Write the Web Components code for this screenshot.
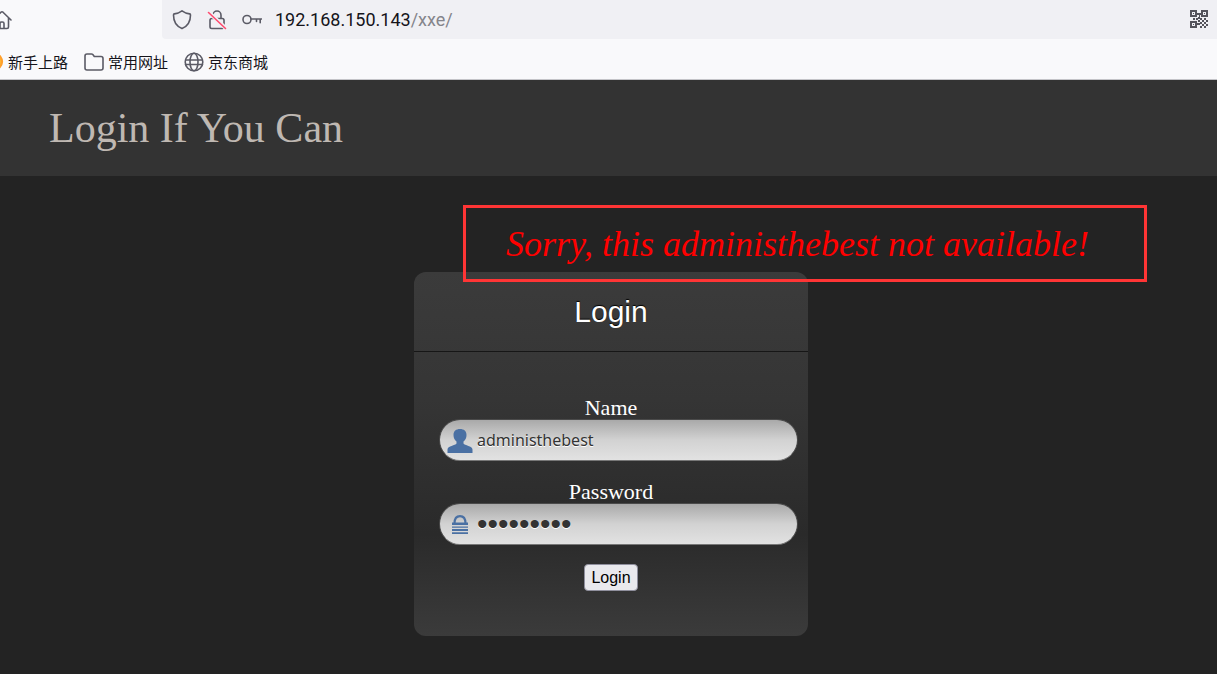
<!DOCTYPE html>
<html lang="zh-CN">
<head>
<meta charset="utf-8">
<title>Login If You Can</title>
<style>
  html, body { margin: 0; min-height: 100%; background: #232323; }
  body { font-family: "Liberation Serif", serif; }
</style>
</head>
<body>
<browser-chrome></browser-chrome>
<page-banner>Login If You Can</page-banner>
<login-page>
  <alert-note slot="alert">Sorry, this administhebest not available!</alert-note>
  <login-card></login-card>
</login-page>

<script>
const define = (name, html, setup) => customElements.define(name, class extends HTMLElement {
  constructor() {
    super();
    const t = document.createElement('template');
    t.innerHTML = html;
    this.attachShadow({ mode: 'open' }).append(t.content.cloneNode(true));
    if (setup) setup(this, this.shadowRoot);
  }
});

/* Line icons on a 20px grid */
const icons = {
  home: '<path d="M1 10 9 2.200Q10 1.300 11 2.200L19 10M3.500 8v9q0 1.500 1.500 1.500h10q1.500 0 1.500-1.500V8M8 18.500v-5q0-1.500 1.500-1.500h1q1.500 0 1.500 1.500v5"/>',
  shield: '<path d="M10 .8C7.500 2.600 5 3.500 2.400 3.900 1.800 4 1.500 4.400 1.500 5c0 6.600 2.500 11.100 8.500 13.600C16 16.100 18.500 11.600 18.500 5c0-.6-.3-1-.9-1.100C15 3.500 12.500 2.600 10 .8Z"/>',
  lock: '<path d="M6 8.500V5.200C6 2.800 7.700 1 10 1s4 1.800 4 4.200v3.300M4.700 8.500h10.600q1.700 0 1.700 1.700v6.600q0 1.700-1.700 1.700H4.700Q3 18.500 3 16.800v-6.600q0-1.700 1.700-1.700Z"/><path d="M2 2.500 19 18.500" stroke="#f0f0f4" stroke-width="4"/><path d="M1.500 2.500 18.500 18.500" stroke="#ff4a6e" stroke-width="1.600"/>',
  key: '<circle cx="5" cy="9.500" r="4"/><path d="M9 9h11M18.200 9v3.700M14.500 9v2.500"/>',
  folder: '<path d="M3 2h4.500q.8 0 1.300.6L10.300 4.500H17q2 0 2 2V16q0 2-2 2H3q-2 0-2-2V4q0-2 2-2Z"/>',
  globe: '<circle cx="10" cy="10" r="8.800"/><ellipse cx="10" cy="10" rx="4" ry="8.800"/><path d="M1.500 8h17M1.500 12.500h17"/>',
  flame: '<circle cx="10" cy="10" r="8.500" fill="#ffb52e" stroke="none"/><path d="M16 4q5 7-2 13" stroke="#ff9f2c" stroke-width="2"/>',
  qr: '<g fill="#55545c" stroke="none"><path fill-rule="evenodd" d="M1 0h7v7H1ZM3 2v3h3V2ZM12 0h7v7h-7ZM14 2v3h3V2ZM1 11h7v7H1ZM3 13v3h3v-3Z"/><path d="M4 3h1v1H4ZM15 3h1v1h-1ZM4 14h1v1H4ZM8 3h4v2H8ZM10 5h1v2h-1ZM9 7h2v2H9ZM4 8h2v2H4ZM7 8h2v2H7ZM11 8h2v2h-2ZM15 8h2v2h-2ZM9 10h2v2H9ZM13 10h2v2h-2ZM17 10h2v2h-2ZM8 13h3v2H8ZM11 12h2v2h-2ZM15 12h2v2h-2ZM13 14h2v2h-2ZM17 14h2v2h-2ZM11 16h2v2h-2ZM15 16h2v2h-2Z"/></g>'
};
define('line-icon', `
<style>
  :host { display: block; flex: none; width: 20px; height: 20px; color: #5b5b66; }
  svg { display: block; width: 100%; height: 100%; fill: none; stroke: currentColor; stroke-width: 1.600; stroke-linecap: round; stroke-linejoin: round; }
</style><svg viewBox="0 0 20 20" aria-hidden="true"></svg>`,
(el, root) => { root.querySelector('svg').innerHTML = icons[el.getAttribute('name')] || ''; });

define('book-mark', `
<style>
  :host { display: block; }
  a { display: flex; align-items: center; gap: 4px; color: #15141a; text-decoration: none;
      font: 15px/20px "Noto Sans CJK SC", sans-serif; }
</style><a href="#"><slot name="icon"></slot><slot></slot></a>`);

define('browser-chrome', `
<style>
  :host { display: block; background: #f9f9fb; border-bottom: 1px solid #c4c4c8; overflow: hidden; }
  .nav { display: flex; height: 39px; }
  .tools { flex: none; width: 162px; display: flex; align-items: center; }
  button { border: 0; padding: 0; margin-left: -8px; background: none; }
  .url { flex: 1; display: flex; align-items: center; gap: 15px; padding: 0 8px 0 10px; background: #f0f0f4; border-radius: 0 0 0 4px; }
  .address { flex: 1; margin-left: -2px; font: 18px/24px Roboto, "Noto Sans", sans-serif; color: #15141a; }
  .path { color: #84848b; }
  .marks { display: flex; align-items: center; gap: 16px; height: 34px; padding-top: 6px; margin-left: -16px; }
</style>
<div class="nav">
  <div class="tools"><button aria-label="主页"><line-icon name="home"></line-icon></button></div>
  <div class="url">
    <line-icon name="shield"></line-icon><line-icon name="lock"></line-icon><line-icon name="key"></line-icon>
    <div class="address">192.168.150.143<span class="path">/xxe/</span></div>
    <line-icon name="qr"></line-icon>
  </div>
</div>
<nav class="marks">
  <book-mark><line-icon slot="icon" name="flame"></line-icon>新手上路</book-mark>
  <book-mark><line-icon slot="icon" name="folder"></line-icon>常用网址</book-mark>
  <book-mark><line-icon slot="icon" name="globe"></line-icon>京东商城</book-mark>
</nav>`);

define('page-banner', `
<style>
  :host { display: block; background: #333; padding: 24px 49px; }
  h1 { margin: 0; font-size: 42px; line-height: 48px; font-weight: 400; color: #bfb8b2; white-space: nowrap; }
</style><h1><slot></slot></h1>`);

define('alert-note', `
<style>
  :host { display: block; position: relative; z-index: 1; box-sizing: border-box; width: 684px;
    margin: 0 70px -10px auto; padding: 16px 40px 15px; border: 3px solid #ff3535; }
  p { margin: 0; font-size: 36px; line-height: 40px; font-style: italic; color: #f00; white-space: nowrap; }
</style><p role="alert"><slot></slot></p>`);

define('login-page', `
<style>
  :host { display: block; padding: 29px 0 38px; }
  .center { display: flex; justify-content: center; padding-left: 5px; }
</style><slot name="alert"></slot><div class="center"><slot></slot></div>`);

define('login-card', `
<style>
  :host { display: block; width: 394px; border-radius: 12px; text-align: center; color: #fff;
    background: linear-gradient(#3b3b3b, #353535 35%, #2a2a2a 72%, #3b3b3b); }
  h2 { margin: 0; padding: 20px 0 19px; border-bottom: 1px solid #161616;
    font: 30px/40px "Liberation Sans", sans-serif; text-shadow: 0 -1px 1px #000; }
  form { padding: 44px 10px 45px 25px; }
  label { display: block; margin-right: 15px; font-size: 22px; line-height: 23px; }
  .field { box-sizing: border-box; display: flex; align-items: center; height: 42px; margin-bottom: 19px; padding: 0 7px;
    border: 1px solid #4a4a4a; border-bottom-color: #777; border-radius: 21px;
    background: linear-gradient(#a9a9a9, #d2d2d2 50%, #e2e2e2); }
  .field svg { flex: none; width: 26px; height: 26px; }
  input { flex: 1; min-width: 0; box-sizing: border-box; height: 24px; border: 0; outline: 0; padding: 0 0 0 4px; background: none; color: #333;
    font: 16px/24px "Noto Sans", sans-serif; text-shadow: 0 1px 0 #fff; }
  input[type=password] { font: 30px/24px "Liberation Sans", sans-serif; }
  button { display: block; margin: 0 auto; height: 27px; padding: 0 6px; border: 1px solid #8f8f9d; border-radius: 4px;
    background: #e9e9ed; color: #000; font: 16px/25px "Liberation Sans", sans-serif; }
  .submit { margin-right: 15px; }
</style>
<h2>Login</h2>
<form onsubmit="return false">
  <label for="name">Name</label>
  <div class="field">
    <svg viewBox="0 0 26 26" fill="#4a70a3" aria-hidden="true"><path d="M13 2c4 0 6.500 2 6.500 6 0 3-1 5-3 6.500v2c1 2 9 2.500 9 6V26H.5v-3.500c0-3.500 8-4 9-6v-2C7.500 13 6.500 11 6.500 8 6.500 4 9 2 13 2Z"/></svg>
    <input id="name" type="text" value="administhebest">
  </div>
  <label for="password">Password</label>
  <div class="field">
    <svg viewBox="0 0 26 26" aria-hidden="true"><path d="M7.500 12.500C7.500 8 9.500 5.200 13 5.200s5.500 2.800 5.500 7.300" fill="none" stroke="#4a70a3" stroke-width="2.200"/><path d="M5 11.500h16V14H5Z" fill="#4a70a3"/><path d="M5 15.500h16v1.200H5ZM5 18h16v2H5ZM5 21.300h16v1.800H5Z" fill="#4a70a3"/></svg>
    <input id="password" type="password" value="admin1234">
  </div>
  <div class="submit"><button>Login</button></div>
</form>`);
</script>
</body>
</html>
